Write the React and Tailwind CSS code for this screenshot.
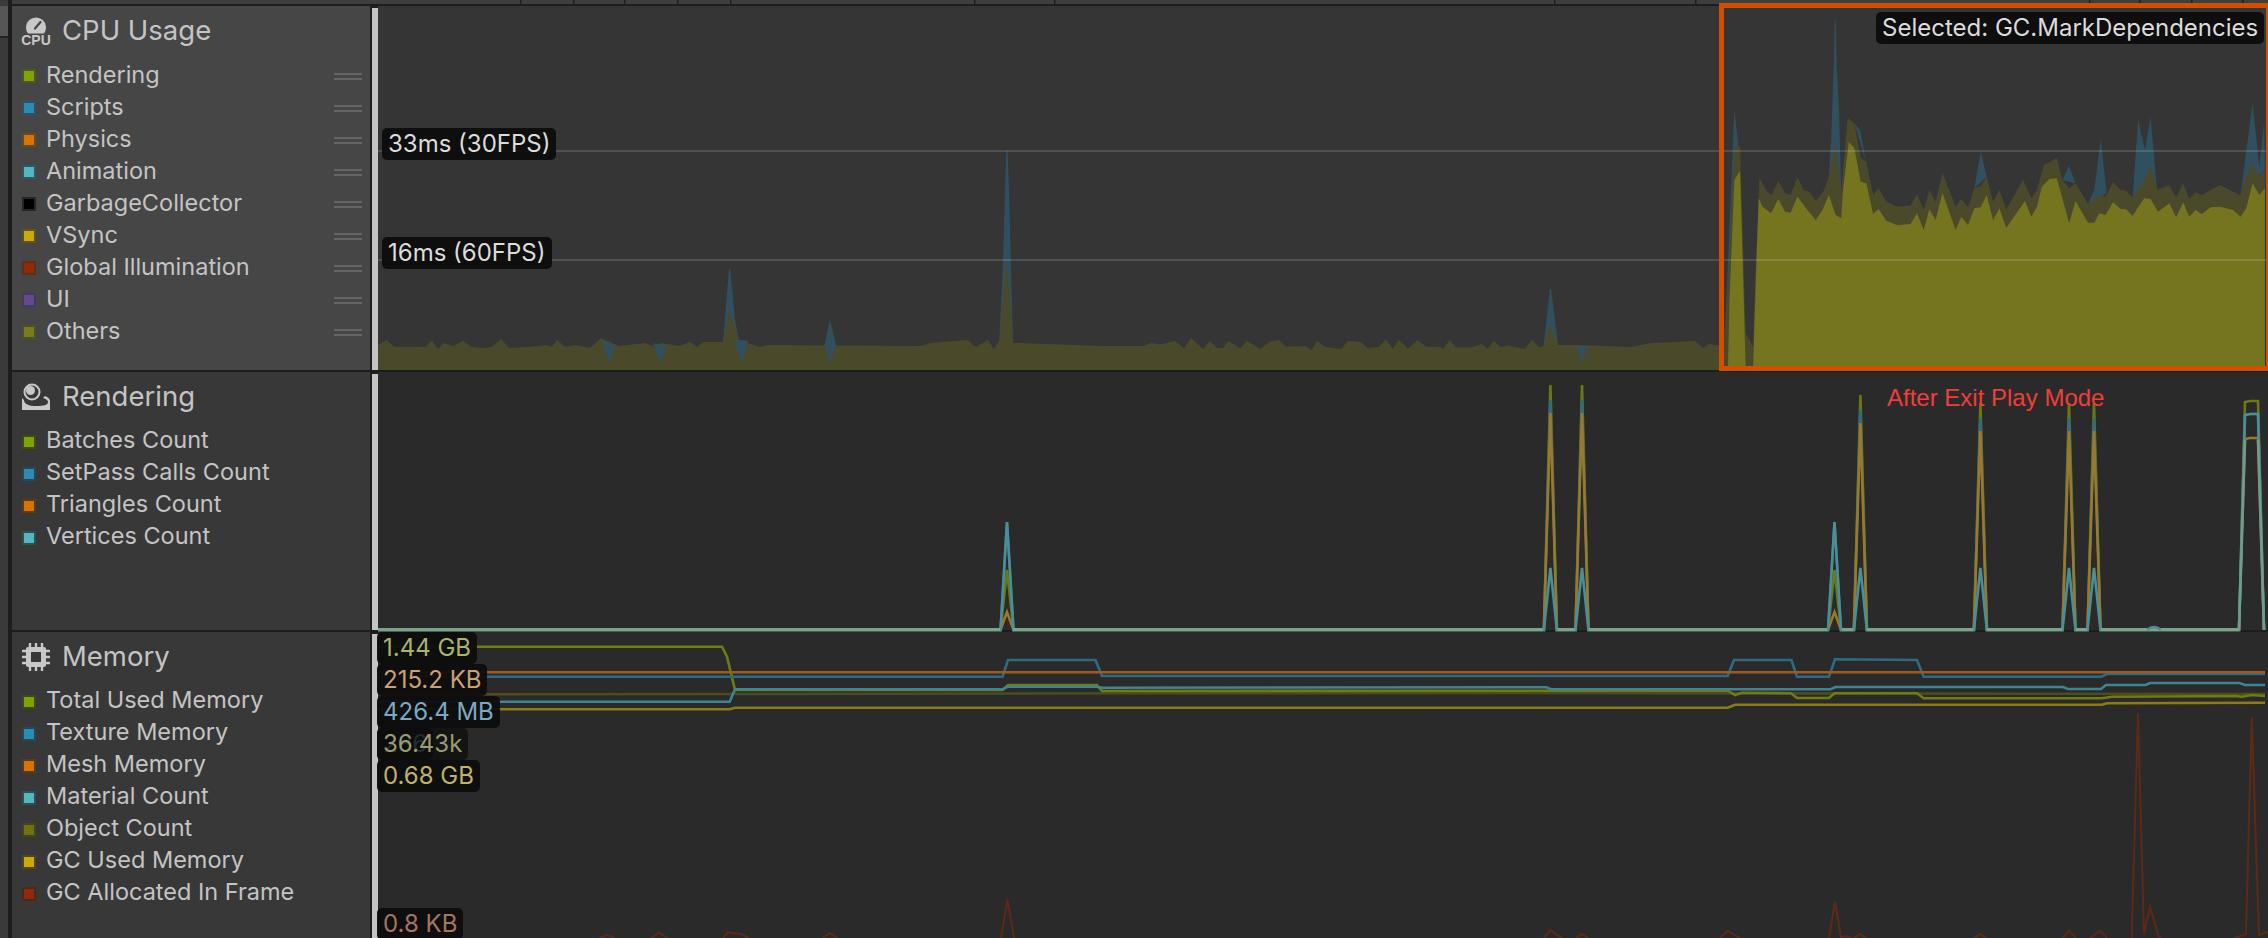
const pts = (a) => a.map((p) => p.join(",")).join(" ");
const z4 = (a) => a.map(([x, y]) => [1680 + x / 2.667, y / 3]);

const oliveLeft = [[378,370],[378,345],[386.5,340],[394,346.7],[425,347],[432,340.7],[438,349],[444,343],[453,346],[463,341],[472,347],[484,348],[492,346.7],[501,339],[509,348],[532,346.7],[546,345],[552,346.7],[557,340],[565,346.7],[576,345],[590,348],[601,338.3],[619,346],[645,343],[653,346],[661,343],[680,346],[690,342],[697,347],[703,342],[723,342],[729.6,310],[739,340],[760,347],[768,345],[921,346],[930.5,343],[967,340],[976,347],[988,340],[994,349],[999.4,340],[1007,256.7],[1013,343],[1020,343],[1100,346],[1143.5,346],[1151,343],[1160,344.5],[1175,341],[1184,348],[1191,338],[1203,349],[1210,341],[1217,348],[1223,348],[1228.5,341],[1240,348],[1247.5,341],[1260,349],[1270,341.7],[1279,340],[1286,346.7],[1305.6,346],[1311.5,350],[1317,341],[1325,346.7],[1341,349],[1348,341],[1361,342],[1367.7,348],[1379,346.7],[1386,339.3],[1392.6,348.7],[1399,340],[1408,348.7],[1417.5,340],[1426,346.7],[1440,346.7],[1443,349],[1449.6,340.3],[1456,347.3],[1471.7,347.3],[1481.6,344],[1487.5,348.7],[1494,341],[1501,347.3],[1507,345.3],[1519,348],[1525,348.7],[1532,340],[1539,347.3],[1543.6,346],[1550,325],[1558,345],[1574.5,345],[1610,346],[1630,347.3],[1650,343.3],[1680,341.7],[1695,340.7],[1703,348],[1709,344],[1727,346.7],[1727,370]];

const oliveSel = z4([[118,1100],[118,1000],[130,800],[145,440],[160,440],[165,620],[175,1000],[195,1040],[200,850],[212,535],[232,575],[245,585],[262,543],[280,578],[295,585],[313,532],[330,570],[345,575],[362,602],[382,575],[397,530],[414,430],[430,575],[447,355],[465,370],[482,475],[497,485],[515,585],[530,565],[550,605],[580,620],[615,617],[632,582],[650,630],[665,570],[682,605],[700,518],[735,620],[750,597],[768,622],[785,565],[802,558],[818,530],[835,605],[852,570],[870,628],[915,540],[937,595],[952,570],[970,495],[1005,475],[1020,540],[1038,565],[1055,550],[1088,612],[1118,585],[1135,590],[1155,547],[1175,570],[1190,572],[1207,592],[1238,540],[1255,497],[1272,570],[1305,555],[1323,592],[1342,550],[1358,597],[1375,577],[1392,585],[1440,555],[1475,575],[1495,585],[1510,530],[1527,490],[1545,530],[1560,510],[1560,1100]]);

const yellowSel = z4([[128,1100],[132,900],[145,540],[160,512],[165,700],[175,1100]]);
const yellowMain = z4([[195,1100],[205,750],[210,595],[220,620],[243,640],[262,597],[280,635],[295,638],[313,590],[340,630],[362,660],[380,630],[397,585],[415,645],[430,655],[435,570],[450,425],[465,445],[482,545],[497,550],[515,642],[530,627],[550,662],[580,676],[615,672],[632,640],[650,690],[665,628],[682,660],[700,578],[735,690],[750,650],[768,675],[785,625],[802,622],[818,585],[835,660],[852,625],[870,684],[920,603],[937,650],[952,620],[965,560],[985,537],[1005,535],[1038,670],[1055,603],[1088,668],[1105,668],[1118,640],[1135,645],[1155,607],[1175,627],[1190,628],[1207,647],[1238,595],[1255,597],[1275,635],[1305,610],[1323,652],[1342,607],[1358,650],[1375,630],[1392,642],[1415,622],[1440,620],[1475,630],[1495,650],[1510,625],[1527,550],[1545,585],[1560,565],[1560,1100]]);

const bluePeaks = [
  [[723,342],[729,269],[730.2,269],[735,320],[739,340]],
  [[999.4,340],[1003.5,250],[1005,190],[1006.3,151],[1007.7,151],[1009,190],[1010.5,250],[1013,343]],
  [[1543.6,346],[1549.8,289],[1551,289],[1558,345]],
  ...[
    [[120,1000],[135,600],[145,330],[155,430],[165,620]],
    [[397,530],[403,420],[410,200],[413,57],[415,57],[418,200],[424,330],[430,575]],
    [[465,370],[480,390],[497,490]],
    [[785,565],[802,455],[818,530]],
    [[1020,540],[1037,497],[1055,550]],
    [[1088,612],[1105,570],[1122,418],[1138,580]],
    [[1207,592],[1222,360],[1240,450],[1255,350],[1272,570]],
    [[1495,585],[1527,310],[1545,500],[1558,365],[1560,510]],
  ].map(z4),
];
const blueTris = [
  [[602,340],[609,361.7],[615.6,346]],
  [[653,343.3],[660,362.3],[667,346]],
  [[733.5,339.3],[741.9,362.3],[748,340.7]],
  [[830,320],[824.5,345],[830,363.3],[836,345]],
  [[1576.5,346],[1582,362.7],[1588,346]],
];

const W = 6.5;
const bigX = [1550.4, 1582, 1860.4, 1980.4, 2069, 2094];
const bigTip = [385, 385, 395, 403, 403, 403];
const sorted = (a) => a.slice().sort((p, q) => p[0] - q[0]);
const line = (spikes, top) => {
  const out = [[378, 630]];
  sorted(spikes).forEach(([x, tip]) => out.push([x - W, 630], [x, tip], [x + W, 630]));
  out.push([2239, 630], [2245, top + 1], [2250, top], [2258, top], [2264, 630]);
  return out;
};
const mk = (d, small, top) => line([[1007, small], [1834.5, small], ...bigX.map((x, i) => [x, bigTip[i] + d])], top);
const mkTeal = () => line([[1007, 522], [1834.5, 522], ...bigX.map((x) => [x, 568])], 414);
const baseSegs = [[378,1000],[1013,1543],[1558,1575],[1589,1827],[1842,1853],[1867,1973],[1987,2062],[2076,2087],[2101,2239]];

const memSeries = [
  { c: "#4c4c1c", p: [[378,694.3],[737,694],[1170,693.3],[1500,693],[2265,694]] },
  { c: "#6f7c12", p: [[378,646.7],[722,646.7],[727,656.7],[735,690],[1002.6,690],[1008,685],[1097,685],[1102,691],[1500,690.7],[1728,690.7],[1735,695],[1742,692.7],[1791,693.3],[1797,698],[1829,698],[1834.5,693.3],[1917,693.3],[1923.6,698.3],[2102,698.3],[2112,696.7],[2234.6,696],[2242,696.7],[2252,695],[2265,696]] },
  { c: "#8d7a18", p: [[378,709.3],[729.7,709.3],[735,707.7],[1727.7,707.7],[1735,704.7],[2102,704.7],[2107,703.3],[2265,702.7]] },
  { c: "#3d8591", p: [[378,701.7],[729.7,701.7],[735,689.3],[1002.6,689.3],[1008,686.7],[1097,686.7],[1102,687.7],[1546.5,687.3],[1551,689.3],[1830.5,689.3],[1835.5,687],[2063,687],[2068,689],[2101,689],[2106,685],[2145.5,685],[2150,683],[2239.5,683],[2245,685],[2265,685]] },
  { c: "#2f6a85", p: [[378,676.7],[1002.6,676.7],[1008,660],[1095.5,660],[1102,676],[1727.7,676],[1734,660],[1791.4,660],[1797,676.7],[1829,676.7],[1835,659.3],[1917,660],[1923.6,676.7],[2101,676.7],[2107,674],[2265,674]] },
  { c: "#9c5c1f", p: [[378,672.3],[2265,672.3]] },
];

const gcSegs = [
  [[599.6,938],[607,935],[615,938]],
  [[651.6,938],[659,932.3],[667,938]],
  [[723.6,938],[728,932.3],[741,934],[749,938]],
  [[823,938],[830,933],[837,938]],
  [[1001,938],[1007.5,900],[1014,938]],
  [[1544,938],[1550.4,930],[1558,936],[1562,938]],
  [[1576,938],[1582,934],[1588,938]],
  [[1720,938],[1727.7,930.7],[1738.5,937.3],[1741,938]],
  [[1829,938],[1835,901.7],[1841,937.3],[1846,936],[1852,938]],
  [[1853.6,938],[1860.4,934],[1866,938]],
  [[1974,938],[1980.4,934],[1986,938]],
  [[2063,938],[2069,930.7],[2075.4,938]],
  [[2090,938],[2100,930.7],[2107,938]],
  [[2131.7,938],[2138,713],[2144,933],[2150,906.7],[2158.7,936.7],[2161,938]],
  [[2234.6,938],[2246,934],[2251.7,717.3],[2259,935],[2268,931.7]],
];

const CpuIcon = () => (
  <div className="flex h-[28px] w-[28px] flex-col items-center">
    <svg width="22" height="17" viewBox="0 0 22 17" className="block shrink-0">
      <path d="M3 16.5 A10 10 0 1 1 19 16.5 Z" fill="#c8c8c8" />
      <path d="M10 11.5 L15.5 5" stroke="#464646" strokeWidth="2.2" strokeLinecap="round" />
    </svg>
    <span className="mt-[1px] text-[14px] font-bold leading-[11px] text-[#c8c8c8] [font-family:'Liberation_Sans',sans-serif]">CPU</span>
  </div>
);

const RenderIcon = () => (
  <svg width="28" height="28" viewBox="0 0 28 28" className="block">
    <circle cx="10" cy="9" r="7.5" fill="none" stroke="#c8c8c8" strokeWidth="2" />
    <circle cx="8.5" cy="7.5" r="4.5" fill="#c8c8c8" />
    <path d="M0 15 V27 H28 V18 C28 16 26 14 23 13 L21 15 C24 16 26 17 26 19 C26 22 22 23 14 23 C7 23 2 21 2 17 Z" fill="#c8c8c8" />
  </svg>
);

const ChipIcon = () => (
  <svg width="28" height="28" viewBox="0 0 28 28" className="block">
    <path fillRule="evenodd" d="M6 4 H22 Q24 4 24 6 V22 Q24 24 22 24 H6 Q4 24 4 22 V6 Q4 4 6 4 Z M9.5 9 Q9 9 9 9.5 V18.5 Q9 19 9.5 19 H18.5 Q19 19 19 18.5 V9.5 Q19 9 18.5 9 Z" fill="#c8c8c8" />
    <path d="M8 0 V4 M14 0 V4 M20 0 V4 M8 24 V28 M14 24 V28 M20 24 V28 M0 8 H4 M0 14 H4 M0 20 H4 M24 8 H28 M24 14 H28 M24 20 H28" stroke="#c8c8c8" strokeWidth="2.4" />
  </svg>
);

const Swatch = ({ cls }) => <span className={`h-[14px] w-[14px] shrink-0 border-2 ${cls}`} />;

const LegendRow = ({ name, cls, handle, lift }) => (
  <div className="flex h-[32px] items-center pl-[10px]">
    <Swatch cls={cls} />
    <span className={`ml-[10px] whitespace-nowrap text-[23.5px] leading-none text-[#c4c4c4] ${lift}`}>{name}</span>
    {handle && (
      <span className="ml-auto mr-[8px] flex w-[28px] flex-col gap-[3px]">
        <span className="h-[2px] bg-[#646464]" />
        <span className="h-[2px] bg-[#646464]" />
      </span>
    )}
  </div>
);

const Sidebar = ({ icon, title, items, handle, bg, lift = "mb-[5px]" }) => (
  <div className={`flex w-[358px] shrink-0 flex-col ${bg}`}>
    <div className="flex h-[50px] items-center pl-[10px]">
      {icon}
      <span className="mb-[1px] ml-[12px] text-[27.5px] leading-none text-[#c4c4c4]">{title}</span>
    </div>
    <div className="mt-[4px] flex flex-col">
      {items.map((it) => (
        <LegendRow key={it[0]} name={it[0]} cls={it[1]} handle={handle} lift={lift} />
      ))}
    </div>
  </div>
);

const Tag = ({ className, children, text = "text-[#dcdcdc]", bg = "bg-[#0d0d0d]/95" }) => (
  <div className={`absolute flex h-[32px] items-center whitespace-nowrap rounded-[5px] pl-[6px] pr-[6px] text-[24px] leading-none ${bg} ${text} ${className}`}>
    {children}
  </div>
);

const Row = ({ height, chartBg, sidebar, children }) => (
  <div className={`flex shrink-0 ${height}`}>
    {sidebar}
    <div className="ml-[2px] mt-[2px] w-[6px] shrink-0 bg-[#c4c4c4]" />
    <div className={`relative min-w-0 flex-1 ${chartBg}`}>{children}</div>
  </div>
);

const cpuItems = [
  ["Rendering", "bg-[#7ea400] border-[#4c5a22]"],
  ["Scripts", "bg-[#2d8ab0] border-[#2c5469]"],
  ["Physics", "bg-[#d87400] border-[#6a4a22]"],
  ["Animation", "bg-[#55b6c0] border-[#2f5a60]"],
  ["GarbageCollector", "bg-[#000000] border-[#262626]"],
  ["VSync", "bg-[#ccaa0c] border-[#5e5122]"],
  ["Global Illumination", "bg-[#8f2a0a] border-[#5e2f20]"],
  ["UI", "bg-[#65488e] border-[#453a5a]"],
  ["Others", "bg-[#7a7a1e] border-[#505026]"],
];
const renderItems = [
  ["Batches Count", "bg-[#7ea400] border-[#3f4a1c]"],
  ["SetPass Calls Count", "bg-[#2d8ab0] border-[#27475a]"],
  ["Triangles Count", "bg-[#d87400] border-[#5a3c1a]"],
  ["Vertices Count", "bg-[#55b6c0] border-[#2c5054]"],
];
const memItems = [
  ["Total Used Memory", "bg-[#7ea400] border-[#3f4a1c]"],
  ["Texture Memory", "bg-[#2d8ab0] border-[#27475a]"],
  ["Mesh Memory", "bg-[#d87400] border-[#5a3c1a]"],
  ["Material Count", "bg-[#55b6c0] border-[#2c5054]"],
  ["Object Count", "bg-[#736f14] border-[#46441e]"],
  ["GC Used Memory", "bg-[#ccaa0c] border-[#524718]"],
  ["GC Allocated In Frame", "bg-[#8f2a0a] border-[#4e281c]"],
];

const ticks = [520, 573, 624, 677, 730, 974, 1054, 1554, 1695, 2089, 2139, 2191, 2242];

export default function App() {
  return (
    <div className="relative flex h-[938px] w-[2268px] overflow-hidden bg-[#1d1d1d] [font-family:Inter,sans-serif]">
      <div className="flex w-[8px] shrink-0 flex-col bg-[#3a3a3a]">
        <div className="mt-[6px] h-[30px] bg-[#565656]" />
        <div className="h-[2px] bg-[#232323]" />
      </div>
      <div className="ml-[4px] flex min-w-0 flex-1 flex-col gap-[2px]">
        <div className="flex h-[4px] shrink-0">
          <div className="w-[358px] shrink-0 bg-[#3e3e3e]" />
          <svg className="block h-[4px] flex-1 bg-[#3e3e3e]" viewBox="370 0 1898 4" preserveAspectRatio="none">
            {ticks.map((t) => (
              <rect key={t} x={t} y="0" width="1.5" height="4" fill="#1f1f1f" />
            ))}
          </svg>
        </div>

        <Row height="h-[364px]" chartBg="bg-[#353535]" sidebar={<Sidebar icon={<CpuIcon />} title="CPU Usage" items={cpuItems} handle bg="bg-[#464646]" lift="mb-[3px]" />}>
          <svg className="absolute inset-0 block h-full w-full" viewBox="378 6 1890 364">
            {bluePeaks.map((p, i) => (
              <polygon key={i} points={pts(p)} fill="#31505f" />
            ))}
            <polygon points={pts(oliveLeft)} fill="#4a4a2b" />
            <polygon points={pts(oliveSel)} fill="#4a4a2b" />
            <polygon points={pts(yellowSel)} fill="#75741f" />
            <polygon points={pts(yellowMain)} fill="#75741f" />
            {blueTris.map((p, i) => (
              <polygon key={i} points={pts(p)} fill="#31505f" />
            ))}
            <rect x="378" y="150.5" width="1890" height="1" fill="#ffffff" fillOpacity="0.28" />
            <rect x="378" y="259.5" width="1890" height="1" fill="#ffffff" fillOpacity="0.28" />
          </svg>
          <Tag className="left-[4px] top-[122px]">33ms (30FPS)</Tag>
          <Tag className="left-[4px] top-[231px]">16ms (60FPS)</Tag>
          <Tag className="left-[1498px] top-[6px] z-30">Selected: GC.MarkDependencies</Tag>
        </Row>

        <Row height="h-[258px]" chartBg="bg-[#2a2a2b]" sidebar={<Sidebar icon={<RenderIcon />} title="Rendering" items={renderItems} bg="bg-[#383838]" />}>
          <svg className="absolute inset-0 z-10 block h-full w-full overflow-visible" viewBox="378 372 1890 258" fill="none" strokeWidth="2.6">
            <polyline points={pts(mk(0, 570, 401))} stroke="#6a7a12" />
            <polyline points={pts(mk(15, 522, 414))} stroke="#2f6a85" />
            <polyline points={pts(mk(28, 612, 438))} stroke="#9a7a2a" />
            <polyline points={pts(mkTeal())} stroke="#4a8f98" />
            {baseSegs.map(([a, b]) => (
              <rect key={a} x={a} y="628" width={b - a} height="3" fill="#7aa28c" />
            ))}
            <path d="M2147 630 Q2154 624 2161 630" stroke="#4a8f98" />
            <polyline points="2239,630 2245,440" stroke="#7aa28c" strokeOpacity="0.7" />
            <polyline points="2258,440 2264,630" stroke="#7aa28c" strokeOpacity="0.7" />
          </svg>
          <span className="absolute left-[1509px] top-[13px] z-20 whitespace-nowrap text-[24px] leading-[26px] text-[#f23d38] [font-family:'Liberation_Sans',sans-serif]">
            After Exit Play Mode
          </span>
        </Row>

        <Row height="h-[306px]" chartBg="bg-[#2a2a2b]" sidebar={<Sidebar icon={<ChipIcon />} title="Memory" items={memItems} bg="bg-[#383838]" />}>
          <svg className="absolute inset-0 block h-full w-full" viewBox="378 632 1890 306" fill="none" strokeWidth="2.6">
            {memSeries.map((s) => (
              <polyline key={s.c} points={pts(s.p)} stroke={s.c} />
            ))}
            {gcSegs.map((p, i) => (
              <polyline key={i} points={pts(p)} stroke="#5e2a16" strokeWidth="2" />
            ))}
          </svg>
          <Tag className="left-[-1px] top-[0px]" text="text-[#a9b46f]">1.44 GB</Tag>
          <Tag className="left-[-1px] top-[32px]" text="text-[#c9a173]">215.2 KB</Tag>
          <Tag className="left-[-1px] top-[64px]" text="text-[#7ba9c3]">426.4 MB</Tag>
          <Tag className="left-[-1px] top-[96px]" text="text-[#4f8f96]">286</Tag>
          <Tag className="left-[-1px] top-[96px]" text="text-[#9d9c6f]" bg="bg-[#0d0d0d]/75">36.43k</Tag>
          <Tag className="left-[-1px] top-[128px]" text="text-[#bfb26a]">0.68 GB</Tag>
          <Tag className="left-[-1px] top-[276px]" text="text-[#a57560]">0.8 KB</Tag>
        </Row>
      </div>
      <div className="absolute left-[1719px] top-[3px] z-20 h-[368px] w-[552px] border-[5px] border-[#d24f00]" />
    </div>
  );
}
